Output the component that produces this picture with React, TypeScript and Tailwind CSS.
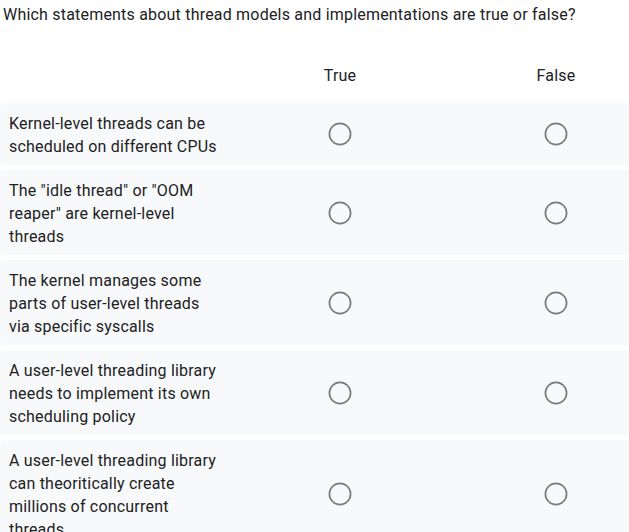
import React from "react";

const rows = [
  "Kernel-level threads can be scheduled on different CPUs",
  'The "idle thread" or "OOM reaper" are kernel-level threads',
  "The kernel manages some parts of user-level threads via specific syscalls",
  "A user-level threading library needs to implement its own scheduling policy",
  "A user-level threading library can theoritically create millions of concurrent threads",
];

function Radio() {
  return (
    <svg width="24" height="24" viewBox="0 0 24 24" className="block">
      <circle cx="12" cy="12" r="10.6" fill="none" stroke="#7a7a7a" strokeWidth="1.7" />
    </svg>
  );
}

export default function App() {
  return (
    <div
      className="w-[629px] h-[532px] overflow-hidden bg-white text-[#202124] tracking-[0.2px]"
      style={{ fontFamily: "Roboto, 'Liberation Sans', sans-serif" }}
    >
      <div className="pl-[3px] pt-[3px] text-[16px] leading-[23px]">
        Which statements about thread models and implementations are true or false?
      </div>
      <div className="w-[664px] mt-[38px]">
        <div className="grid grid-cols-[232px_216px_216px] text-[16px] leading-[23px] mb-[16px]">
          <div />
          <div className="text-center">True</div>
          <div className="text-center">False</div>
        </div>
        <div className="flex flex-col gap-[5px]">
          {rows.map((r, i) => (
            <div
              key={i}
              className="grid grid-cols-[232px_216px_216px] items-center bg-[#f8f9fa] rounded-[4px]"
            >
              <div className="pl-[9px] pr-[12px] pt-[9px] pb-[7px] text-[16px] leading-[23px]">{r}</div>
              <div className="flex justify-center">
                <Radio />
              </div>
              <div className="flex justify-center">
                <Radio />
              </div>
            </div>
          ))}
        </div>
      </div>
    </div>
  );
}
